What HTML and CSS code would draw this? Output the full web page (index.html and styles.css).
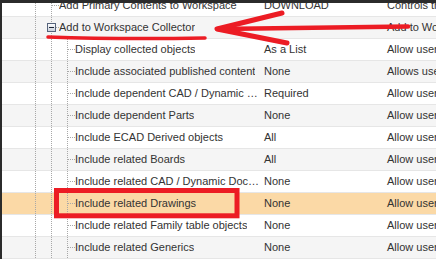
FILE: index.html
```html
<!DOCTYPE html>
<html>
<head>
<meta charset="utf-8">
<link rel="stylesheet" href="styles.css">
</head>
<body>
<div class="frame">
  <div class="grid">
    <div class="row">
      <div class="cell tree"><span class="ind"></span><span class="ind line"></span><span class="ind tee"></span><span class="label">Add Primary Contents to Workspace</span></div>
      <div class="cell">DOWNLOAD</div>
      <div class="cell desc">Controls the download of primary contents</div>
    </div>
    <div class="row alt">
      <div class="cell tree"><span class="ind"></span><span class="ind line"></span><span class="ind minus"><svg width="9" height="9" viewBox="0 0 9 9"><defs><linearGradient id="mg" x1="0" y1="0" x2="0" y2="1"><stop offset="0" stop-color="#ffffff"/><stop offset="1" stop-color="#c6ceda"/></linearGradient></defs><rect x="0.5" y="0.5" width="8" height="8" fill="url(#mg)" stroke="#56647c"/><path d="M2 4.5h5" stroke="#1d2636"/></svg></span><span class="label">Add to Workspace Collector</span></div>
      <div class="cell"></div>
      <div class="cell desc">Add to Workspace Collector settings</div>
    </div>
    <div class="row">
      <div class="cell tree"><span class="ind"></span><span class="ind line"></span><span class="ind line"></span><span class="ind tee"></span><span class="label">Display collected objects</span></div>
      <div class="cell">As a List</div>
      <div class="cell desc">Allow user to choose</div>
    </div>
    <div class="row alt">
      <div class="cell tree"><span class="ind"></span><span class="ind line"></span><span class="ind line"></span><span class="ind tee"></span><span class="label">Include associated published content</span></div>
      <div class="cell">None</div>
      <div class="cell desc">Allows users to include</div>
    </div>
    <div class="row">
      <div class="cell tree"><span class="ind"></span><span class="ind line"></span><span class="ind line"></span><span class="ind tee"></span><span class="label">Include dependent CAD / Dynamic Documents</span></div>
      <div class="cell">Required</div>
      <div class="cell desc">Allow user to include</div>
    </div>
    <div class="row alt">
      <div class="cell tree"><span class="ind"></span><span class="ind line"></span><span class="ind line"></span><span class="ind tee"></span><span class="label">Include dependent Parts</span></div>
      <div class="cell">None</div>
      <div class="cell desc">Allow user to include</div>
    </div>
    <div class="row">
      <div class="cell tree"><span class="ind"></span><span class="ind line"></span><span class="ind line"></span><span class="ind tee"></span><span class="label">Include ECAD Derived objects</span></div>
      <div class="cell">All</div>
      <div class="cell desc">Allow user to include</div>
    </div>
    <div class="row alt">
      <div class="cell tree"><span class="ind"></span><span class="ind line"></span><span class="ind line"></span><span class="ind tee"></span><span class="label">Include related Boards</span></div>
      <div class="cell">All</div>
      <div class="cell desc">Allow user to include</div>
    </div>
    <div class="row">
      <div class="cell tree"><span class="ind"></span><span class="ind line"></span><span class="ind line"></span><span class="ind tee"></span><span class="label">Include related CAD / Dynamic Documents</span></div>
      <div class="cell">None</div>
      <div class="cell desc">Allow user to include</div>
    </div>
    <div class="row sel">
      <div class="cell tree"><span class="ind"></span><span class="ind line"></span><span class="ind line"></span><span class="ind tee"></span><span class="label">Include related Drawings</span></div>
      <div class="cell">None</div>
      <div class="cell desc">Allow user to include</div>
    </div>
    <div class="row">
      <div class="cell tree"><span class="ind"></span><span class="ind line"></span><span class="ind line"></span><span class="ind tee"></span><span class="label">Include related Family table objects</span></div>
      <div class="cell">None</div>
      <div class="cell desc">Allow user to include</div>
    </div>
    <div class="row alt">
      <div class="cell tree"><span class="ind"></span><span class="ind line"></span><span class="ind line"></span><span class="ind tee"></span><span class="label">Include related Generics</span></div>
      <div class="cell">None</div>
      <div class="cell desc">Allow user to include</div>
    </div>
  </div>
</div>
<svg class="marks" width="436" height="259" viewBox="0 0 436 259">
  <g fill="none" stroke="#ec1c24" stroke-linecap="round" stroke-linejoin="round">
    <path d="M48 37 Q120 39.5 205 38" stroke-width="3.5"/>
    <path d="M408 26.5 L218 29" stroke-width="4.5"/>
    <path d="M282 13 L217 29 L287 43" stroke-width="5"/>
    <rect x="56.5" y="190.5" width="180.5" height="25.3" stroke-width="5" stroke-linecap="butt" stroke-linejoin="miter"/>
  </g>
</svg>
</body>
</html>
```
FILE: styles.css
```css
* { box-sizing: border-box; }
html, body { margin: 0; padding: 0; }
body {
  width: 436px;
  height: 259px;
  overflow: hidden;
  position: relative;
  background: #ffffff;
  font-family: "Liberation Sans", Arial, sans-serif;
  font-size: 11px;
  color: #333333;
}
.frame {
  height: 259px;
  overflow: hidden;
  border-top: 3px solid #2b2b2b;
  border-left: 2px solid #2b2b2b;
}
.grid { margin-top: -8px; }
.row {
  display: grid;
  grid-template-columns: 260px 122px 1fr;
  height: 22px;
  border-bottom: 1px solid #e6e6e6;
  background: #ffffff;
}
.row.alt { background: #f5f5f5; }
.row.sel { background: #fbd9a6; }
.cell {
  line-height: 21px;
  white-space: nowrap;
  overflow: hidden;
  padding-left: 2px;
}
.cell.desc { padding-left: 3px; }
.tree {
  display: flex;
  padding-left: 9px;
}
.tree .label {
  min-width: 0;
  overflow: hidden;
  text-overflow: ellipsis;
}
.ind { flex: 0 0 16px; height: 21px; }
.line {
  background: repeating-linear-gradient(to bottom, #a8a8a8 0 1px, transparent 1px 2px) 8px 0 / 1px 100% no-repeat;
}
.tee {
  background:
    repeating-linear-gradient(to bottom, #a8a8a8 0 1px, transparent 1px 2px) 8px 0 / 1px 100% no-repeat,
    repeating-linear-gradient(to right, #a8a8a8 0 1px, transparent 1px 2px) 9px 10px / 7px 1px no-repeat;
}
.minus {
  display: flex;
  align-items: center;
  padding-left: 4px;
  background:
    repeating-linear-gradient(to bottom, #a8a8a8 0 1px, transparent 1px 2px) 8px 0 / 1px 100% no-repeat,
    repeating-linear-gradient(to right, #a8a8a8 0 1px, transparent 1px 2px) 13px 10px / 3px 1px no-repeat;
}
.minus svg { display: block; }
.marks {
  position: absolute;
  left: 0;
  top: 0;
  pointer-events: none;
}
```
